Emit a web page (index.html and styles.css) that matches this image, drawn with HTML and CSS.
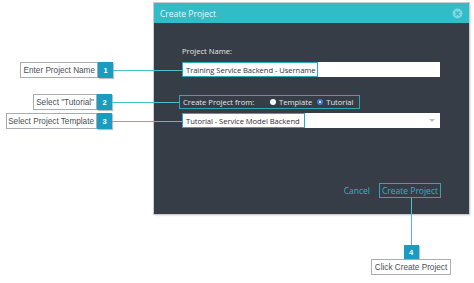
FILE: index.html
```html
<!DOCTYPE html>
<html>
<head>
<meta charset="utf-8">
<link rel="stylesheet" href="styles.css">
</head>
<body>
<div class="stage">
  <div class="dialog">
    <div class="dlg-head">
      <span class="dlg-title">Create Project</span>
      <svg class="dlg-close" width="11" height="11" viewBox="0 0 11 11"><circle cx="5.5" cy="5.5" r="5" fill="#7fd6dc"/><path d="M3.5 3.5 L7.5 7.5 M7.5 3.5 L3.5 7.5" stroke="#2fbcc6" stroke-width="1.3"/></svg>
    </div>
    <div class="dlg-body">
      <div class="lbl">Project Name:</div>
      <div class="field"><span class="hl hl-name">Training Service Backend - Username</span></div>
      <div class="radio-row">
        <span class="from">Create Project from:</span>
        <span class="opt"><span class="radio"></span>Template</span>
        <span class="opt"><span class="radio on"></span>Tutorial</span>
      </div>
      <div class="field select"><span class="hl hl-sel">Tutorial - Service Model Backend</span><span class="caret"></span></div>
      <div class="footer">
        <span class="cancel">Cancel</span>
        <span class="create">Create Project</span>
      </div>
    </div>
  </div>

  <div class="callout c1"><span class="ctext">Enter Project Name</span><span class="badge">1</span><span class="line"></span></div>
  <div class="callout c2"><span class="ctext">Select "Tutorial"</span><span class="badge">2</span><span class="line"></span></div>
  <div class="callout c3"><span class="ctext">Select Project Template</span><span class="badge">3</span><span class="line"></span></div>
  <div class="vline"></div>
  <div class="callout4"><span class="badge">4</span><span class="ctext">Click Create Project</span></div>
</div>
</body>
</html>
```
FILE: styles.css
```css
html, body { margin: 0; padding: 0; background: #ffffff; }
body { font-family: "Open Sans", "DejaVu Sans", sans-serif; }
.stage { position: relative; width: 474px; height: 283px; padding: 3px 0 0 154px; box-sizing: border-box; }
.dialog { width: 315px; height: 211px; background: #363d47; box-shadow: 0 0 0 1px #c9ccd0, 1px 1px 2px rgba(0,0,0,0.25); display: flex; flex-direction: column; }
.dlg-head { height: 20px; background: #30bdc7; display: flex; align-items: center; justify-content: space-between; padding: 0 6px 0 6px; flex: none; }
.dlg-title { color: #e6f7f8; font-size: 8.5px; }
.dlg-close { display: block; }
.dlg-body { flex: 1; padding: 23px 28px 16px 28px; display: flex; flex-direction: column; color: #e4e6e8; font-size: 7.6px; white-space: nowrap; }
.lbl { height: 10px; line-height: 10px; margin-bottom: 6px; }
.field { height: 15px; background: #ffffff; display: flex; align-items: center; position: relative; width: 258px; }
.hl { display: flex; align-items: center; height: 15px; box-sizing: border-box; border: 1px solid #2aa9b9; color: #2c3138; padding: 0 0 0 3px; white-space: nowrap; overflow: hidden; letter-spacing: -0.05px; }
.hl-name { width: 136px; }
.hl-sel { width: 123px; }
.caret { position: absolute; right: 5px; top: 6px; width: 0; height: 0; border-left: 3px solid transparent; border-right: 3px solid transparent; border-top: 3px solid #b9bec4; }
.radio-row { margin-top: 18px; margin-left: -3px; width: 181px; height: 14px; box-sizing: border-box; border: 1px solid #2aa9b9; display: flex; align-items: center; padding-left: 3px; }
.from { width: 87px; }
.opt { display: flex; align-items: center; margin-right: 5px; }
.radio { width: 6px; height: 6px; border-radius: 50%; background: #ffffff; margin-right: 3px; box-sizing: border-box; }
.radio.on { border: 2px solid #3b7fe0; background: #ffffff; }
.select { margin-top: 4px; }
.footer { margin-top: auto; display: flex; justify-content: flex-end; align-items: center; gap: 9px; }
.cancel { color: #2cb6c2; font-size: 8.5px; }
.create { color: #2cb6c2; font-size: 8.5px; border: 1px solid #2aa9b9; height: 15px; box-sizing: border-box; display: flex; align-items: center; padding: 0 2px; }

.callout { position: absolute; display: flex; align-items: center; height: 16px; }
.ctext { font-family: "Liberation Sans", "DejaVu Sans", sans-serif; font-size: 8.2px; color: #4a4f55; border: 1px solid #a9acb0; background: #fff; height: 16px; box-sizing: border-box; display: flex; align-items: center; justify-content: flex-end; padding: 0 2px; white-space: nowrap; }
.badge { width: 15px; height: 16px; background: #1a9cc0; color: #ffffff; font-family: "Liberation Sans", sans-serif; font-weight: bold; font-size: 7.5px; display: flex; align-items: center; justify-content: center; box-shadow: 1px 1px 1px rgba(0,0,0,0.25); }
.line { height: 1px; background: #4cc0c7; }
.c1 { left: 20px; top: 62px; }
.c1 .ctext { width: 78px; }
.c1 .line { width: 69px; }
.c2 { left: 33px; top: 94px; }
.c2 .ctext { width: 64px; }
.c2 .line { width: 67px; }
.c3 { left: 6px; top: 113px; }
.c3 .ctext { width: 91px; }
.c3 .line { width: 70px; }
.vline { position: absolute; left: 411px; top: 198px; width: 1px; height: 47px; background: #4cc0c7; }
.callout4 { position: absolute; left: 371px; top: 245px; display: flex; flex-direction: column; align-items: center; width: 80px; }
.callout4 .badge { height: 14px; }
.callout4 .ctext { width: 80px; justify-content: center; }
```
